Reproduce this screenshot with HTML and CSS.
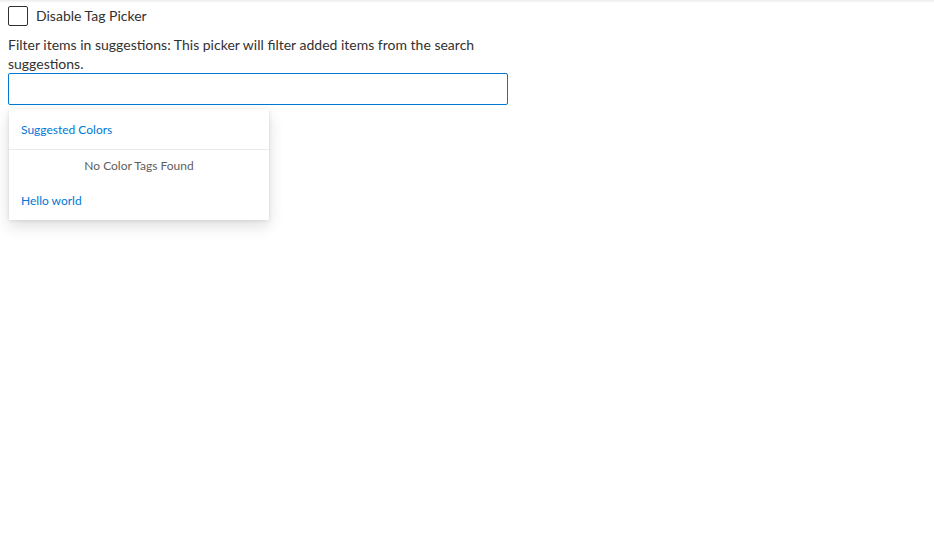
FILE: index.html
```html
<!DOCTYPE html>
<html>
<head>
<meta charset="utf-8">
<link rel="stylesheet" href="styles.css">
</head>
<body>
<div class="topbar"></div>
<div class="page">
  <label class="check">
    <span class="box"></span>
    <span class="check-label">Disable Tag Picker</span>
  </label>
  <p class="desc">Filter items in suggestions: This picker will filter added items from the search suggestions.</p>
  <div class="picker">
    <div class="input"></div>
    <div class="callout">
      <div class="sugg-header">Suggested Colors</div>
      <div class="sugg-none">No Color Tags Found</div>
      <div class="sugg-footer">Hello world</div>
    </div>
  </div>
</div>
</body>
</html>
```
FILE: styles.css
```css
html, body {
  margin: 0;
  padding: 0;
  background: #fff;
}
body {
  font-family: Lato, "Segoe UI", sans-serif;
  color: #323130;
  font-size: 14px;
  min-height: 548px;
}
.topbar {
  height: 3px;
  background: linear-gradient(#ececec, #fff);
}
.page {
  padding: 3px 8px 40px 8px;
}
.check {
  display: flex;
  align-items: center;
  height: 20px;
}
.box {
  width: 18px;
  height: 18px;
  border: 1px solid #323130;
  border-radius: 2px;
  box-sizing: content-box;
}
.check-label {
  margin-left: 8px;
  line-height: 20px;
}
.desc {
  margin: 9px 0 0 0;
  width: 500px;
  line-height: 19px;
}
.picker {
  width: 500px;
}
.input {
  height: 30px;
  border: 1px solid #0078d4;
  border-radius: 2px;
}
.callout {
  margin: 4px 0 0 1px;
  width: 260px;
  background: #fff;
  box-shadow: 0 6.4px 14.4px rgba(0,0,0,0.132), 0 1.2px 3.6px rgba(0,0,0,0.108);
  font-size: 12px;
}
.sugg-header {
  color: #0078d4;
  padding: 2px 12px 0 12px;
  height: 38px;
  line-height: 38px;
  border-bottom: 1px solid #edebe9;
}
.sugg-none {
  text-align: center;
  color: #605e5c;
  height: 32px;
  line-height: 32px;
}
.sugg-footer {
  color: #0078d4;
  padding: 0 12px;
  height: 38px;
  line-height: 38px;
}
```
